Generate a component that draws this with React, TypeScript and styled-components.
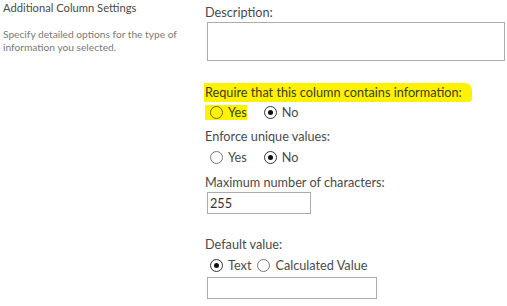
import React from "react";
import styled, { createGlobalStyle } from "styled-components";

const GlobalStyle = createGlobalStyle`
  html, body { margin: 0; padding: 0; background: #fff; }
  body { font-family: Lato, "Open Sans", sans-serif; color: #4a4a4a; }
`;

const Page = styled.div`
  display: flex;
  width: 507px;
  height: 306px;
  overflow: hidden;
  background: #fff;
`;

const Aside = styled.div`
  width: 205px;
  flex: none;
  padding: 1px 0 0 3px;
  box-sizing: border-box;
`;

const SectionTitle = styled.div`
  font-size: 11.2px;
  line-height: 13px;
  color: #4a4a4a;
  white-space: nowrap;
`;

const SectionHelp = styled.div`
  margin-top: 14px;
  font-size: 10.2px;
  line-height: 13px;
  color: #7a7a7a;
  width: 190px;
`;

const Main = styled.div`
  flex: 1;
  display: flex;
  flex-direction: column;
  align-items: flex-start;
  padding-top: 4px;
`;

const Label = styled.div<{ $gap?: number }>`
  margin-top: ${(p) => p.$gap ?? 0}px;
  font-size: 12.7px;
  line-height: 16px;
  color: #4a4a4a;
  white-space: nowrap;
`;

const Marked = styled.div<{ $gap?: number }>`
  margin-top: ${(p) => p.$gap ?? 0}px;
  margin-left: -1px;
  padding: 0 10px 0 1px;
  font-size: 12.7px;
  line-height: 19px;
  color: #3e3d22;
  background: #fff200;
  border-radius: 0 7px 3px 0;
  white-space: nowrap;
`;

const Field = styled.div<{ $w: number; $h: number; $gap?: number }>`
  margin: ${(p) => p.$gap ?? 2}px 0 0 2px;
  width: ${(p) => p.$w}px;
  height: ${(p) => p.$h}px;
  box-sizing: border-box;
  border: 1px solid #ababab;
  background: #fff;
  font-size: 12.7px;
  line-height: 20px;
  padding-left: 2px;
  color: #333;
`;

const Options = styled.div<{ $gap?: number; $spread?: number }>`
  margin-top: ${(p) => p.$gap ?? 0}px;
  display: flex;
  align-items: center;
  gap: ${(p) => p.$spread ?? 12}px;
  height: 16px;
`;

const Option = styled.label<{ $marked?: boolean }>`
  display: flex;
  align-items: center;
  gap: 5px;
  padding-left: 5px;
  height: ${(p) => (p.$marked ? "15px" : "16px")};
  background: ${(p) => (p.$marked ? "#fff200" : "transparent")};
  font-size: 12.7px;
  line-height: 16px;
  color: ${(p) => (p.$marked ? "#3e3d22" : "#4a4a4a")};
  white-space: nowrap;
`;

const Radio = styled.span<{ $on?: boolean; $tint?: boolean }>`
  width: 13px;
  height: 13px;
  box-sizing: border-box;
  border-radius: 50%;
  border: 1px solid ${(p) => (p.$on ? "#333" : p.$tint ? "#6b6a20" : "#777")};
  background: ${(p) => (p.$tint ? "transparent" : "#fff")};
  display: flex;
  align-items: center;
  justify-content: center;
  flex: none;
  &::after {
    content: "";
    width: 5px;
    height: 5px;
    border-radius: 50%;
    background: ${(p) => (p.$on ? "#111" : "transparent")};
  }
`;

export default function App() {
  return (
    <Page>
      <GlobalStyle />
      <Aside>
        <SectionTitle>Additional Column Settings</SectionTitle>
        <SectionHelp>Specify detailed options for the type of information you selected.</SectionHelp>
      </Aside>
      <Main>
        <Label>Description:</Label>
        <Field $w={298} $h={39} />
        <Marked $gap={22}>Require that this column contains information:</Marked>
        <Options $gap={2}>
          <Option $marked>
            <Radio $tint />
            Yes
          </Option>
          <Option>
            <Radio $on />
            No
          </Option>
        </Options>
        <Label $gap={8}>Enforce unique values:</Label>
        <Options $gap={5}>
          <Option>
            <Radio />
            Yes
          </Option>
          <Option>
            <Radio $on />
            No
          </Option>
        </Options>
        <Label $gap={9}>Maximum number of characters:</Label>
        <Field $w={104} $h={22}>255</Field>
        <Label $gap={22}>Default value:</Label>
        <Options $gap={5} $spread={1}>
          <Option>
            <Radio $on />
            Text
          </Option>
          <Option>
            <Radio />
            Calculated Value
          </Option>
        </Options>
        <Field $w={170} $h={22} $gap={4} />
      </Main>
    </Page>
  );
}
